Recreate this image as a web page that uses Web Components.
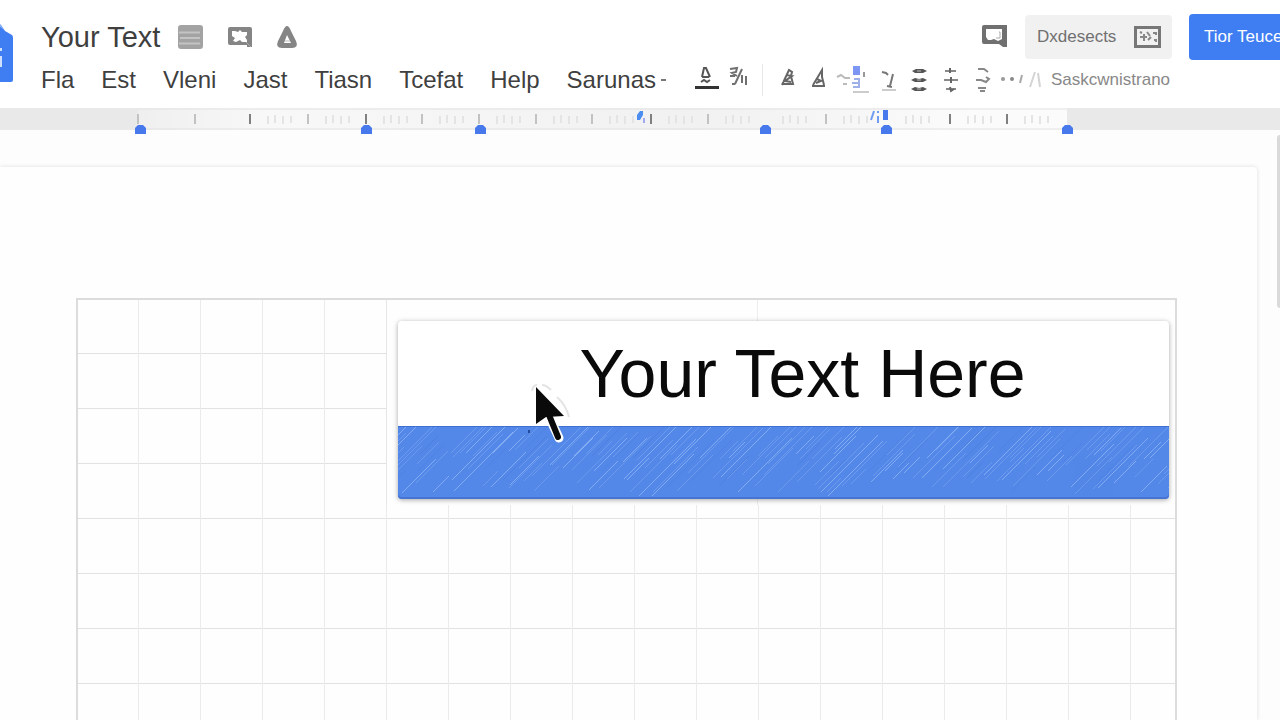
<!DOCTYPE html>
<html lang="en">
<head>
<meta charset="utf-8">
<title>Your Text</title>
<style>
    body {
        margin: 0;
        min-height: 100vh;
        overflow: hidden;
        background: #fdfdfd;
        color: #3f3f3f;
        font-family: "Liberation Sans", Arial, sans-serif;
    }
</style>
</head>
<body>
<doc-app></doc-app>

<script>
// [width, height, markup] of every glyph in the header
const ICONS = {
    logo: [40, 62, `
        <path d="M0 2h23l5 1 4 6 7 4q1 1 1 3v42q0 2-2 2H0z" fill="#3f7df2"/>
        <path d="M26 0l5 8-5-4z" fill="#8db2f8"/>
        <path d="M20 26h9v3h-9zM27 34h2v11h-2z" fill="#cfe0ff"/>`],
    lines: [25, 24, `
        <rect width="25" height="24" rx="3" fill="#a3a3a3"/>
        <path d="M1 7.500h21M2 13h20M1 18.500h21" stroke="#c4c4c4" stroke-width="2"/>`],
    star: [24, 22, `
        <path d="M2 1h20q2 0 2 2v18h-5v-2H2q-2 0-2-2V3q0-2 2-2z" fill="#858585"/>
        <path d="M4 5h3l3 1 2-2 2 2h5v3l-2 2 2 3v2h-5l-2-2-4 2-3-1 2-3-3-2z" fill="#fff"/>
        <path d="M18 16l5 5" stroke="#aaa" stroke-width="1"/>`],
    cloud: [20, 22, `
        <path d="M10 0q2 0 4 5l5 10q3 7-4 7H5q-7 0-4-7L6 5q2-5 4-5z" fill="#858585"/>
        <path d="M10 9l4 8H7z" fill="#fff"/>
        <path d="M8 15h5" stroke="#bbb"/>`],
    comment: [28, 24, `
        <path d="M4 0h23v22h-4l-4-3H4q-2 0-2-2V2q0-2 2-2z" fill="#707070"/>
        <path d="M6 4h16v10l-4 2-4-2-3 1H8l-2-3z" fill="#fff"/>
        <path d="M19 7h1v6h-4" fill="none" stroke="#aaa"/>`],
    frame: [27, 22, `
        <rect x="1.500" y="1.500" width="24" height="19" fill="#f1f1f1" stroke="#777" stroke-width="3"/>
        <path d="M6 11h7M10 8v7M13 6l3 4M14 14l3-3M19 7h3v2M20 14h2v2M6 6l2 1" stroke="#888" stroke-width="2" fill="none"/>`],
    textColor: [24, 28, `
        <path d="M1 20h24v3H1z" fill="#333"/>
        <path d="M8 11L10 2h2l4 9M8 11h7M7 16l3-2 3 2 3-2" fill="none" stroke="#555" stroke-width="2"/>`],
    percent: [24, 28, `
        <path d="M4 3l7-1-1 4-4 1 5 3M4 10h5M16 3L9 18M16 9v8M20 10v9M6 18h3" fill="none" stroke="#707070" stroke-width="2"/>`],
    bold: [24, 28, `
        <path d="M7 19L14 4l3 2-1 4 2 8H7M11 9l6 1-7 5 6 1" fill="none" stroke="#666" stroke-width="2"/>`],
    italic: [24, 28, `
        <path d="M6 19L15 4v7l2 8M5 20h13M10 13l4 2-5 2" fill="none" stroke="#666" stroke-width="2"/>`],
    highlight: [32, 28, `
        <path d="M-2 11l4-2 4 3h5M4 18h4" fill="none" stroke="#bbb" stroke-width="2"/>
        <path d="M14 0h7v9h-7z" fill="#7e96f3"/>
        <path d="M15 13h5v8h-6M13 17h7" fill="none" stroke="#9fb0e8" stroke-width="2"/>
        <path d="M25 6v5" stroke="#999" stroke-width="2"/>
        <path d="M14 26h16" stroke="#ccc" stroke-width="2"/>`],
    slant: [24, 28, `
        <path d="M3 6l4 1 2 2M14 8l-3 12M8 20l5 1" fill="none" stroke="#777" stroke-width="2"/>
        <path d="M3 24h14" stroke="#ccc" stroke-width="2"/>`],
    bullets: [24, 28, `
        <path d="M1 5l4-2h7l4 2-4 2H4zM0 14l4-2 4 1 4-1 4 2-4 2H4zM0 23l4-2 4 1 4-1 4 2-4 2H4z" fill="#555"/>
        <path d="M6 5h4M6 14h4M6 23h4" stroke="#bbb" stroke-width="1"/>`],
    numbers: [24, 28, `
        <path d="M2 5h11M1 14h14M3 23h10" stroke="#888" stroke-width="2"/>
        <path d="M7 2v5M8 11v6M7 21l1 4 3-2" stroke="#666" stroke-width="2" fill="none"/>`],
    indent: [24, 28, `
        <path d="M3 3h6l4 3M1 14h5l5 2 3-3-3-2M3 22h8M5 25h5" stroke="#888" stroke-width="2" fill="none"/>`],
    more: [36, 28, `
        <circle cx="-4" cy="13" r="2" fill="#999"/>
        <circle cx="5" cy="13" r="2" fill="#888"/>
        <path d="M15 9l-2 8" stroke="#aaa" stroke-width="2"/>
        <path d="M28 6l-5 15M31 7l2 14" stroke="#d4d4d4" stroke-width="2"/>`]
};

class DocIcon extends HTMLElement {
    constructor() {
        super();
        this.attachShadow({ mode: 'open' });
    }

    connectedCallback() {
        const [width, height, markup] = ICONS[this.getAttribute('name')];
        this.shadowRoot.innerHTML = `
        <style>
            :host { display: block; flex: none; }
            svg { display: block; overflow: visible; }
        </style>
        <svg width="${width}" height="${height}" viewBox="0 0 ${width} ${height}" aria-hidden="true">${markup}</svg>
        `;
    }
}

class DocMenuBar extends HTMLElement {
    constructor() {
        super();
        this.attachShadow({ mode: 'open' });
        this.items = ['Fla', 'Est', 'Vleni', 'Jast', 'Tiasn', 'Tcefat', 'Help', 'Sarunas'];
        this.shadowRoot.innerHTML = `
        <style>
            :host { display: block; flex: none; }
            nav { display: flex; gap: 27px; align-items: center; }
            button {
                padding: 0;
                border: 0;
                background: none;
                color: inherit;
                font: 24px/32px "Liberation Sans", Arial, sans-serif;
            }
            .caret { width: 5px; height: 2px; background: #777; margin-left: -22px; }
        </style>
        <nav>
            ${this.items.map((item) => `<button type="button">${item}</button>`).join('')}
            <span class="caret"></span>
        </nav>
        `;
    }
}

class DocToolbar extends HTMLElement {
    constructor() {
        super();
        this.attachShadow({ mode: 'open' });
        this.shadowRoot.innerHTML = `
        <style>
            :host { display: flex; align-items: center; gap: 8px; }
            button { flex: none; padding: 0; border: 0; background: none; color: inherit; }
            .label { font: 17px/32px "Liberation Sans", Arial, sans-serif; color: #888; }
            hr { flex: none; width: 1px; height: 32px; margin: 0 4px; border: 0; background: #e8e8e8; }
        </style>
        ${this._tool('textColor', 'Text color')}
        ${this._tool('percent', 'Format')}
        <hr>
        ${this._tool('bold', 'Bold')}
        ${this._tool('italic', 'Italic')}
        ${this._tool('highlight', 'Highlight')}
        ${this._tool('slant', 'Slant')}
        ${this._tool('bullets', 'Bulleted list')}
        ${this._tool('numbers', 'Numbered list')}
        ${this._tool('indent', 'Indent')}
        ${this._tool('more', 'More')}
        <button type="button" class="label">Saskcwnistrano</button>
        `;
    }

    _tool(name, label) {
        return `<button type="button" aria-label="${label}"><doc-icon name="${name}"></doc-icon></button>`;
    }
}

class DocHeader extends HTMLElement {
    constructor() {
        super();
        this.attachShadow({ mode: 'open' });
        this.shadowRoot.innerHTML = `
        <style>
            :host { display: flex; gap: 28px; height: 108px; background: #fff; }
            .logo { flex: none; margin: 22px 0 0 -27px; }
            .rows { flex: 1; min-width: 0; padding-top: 14px; }
            .row { display: flex; align-items: center; }
            .top { height: 46px; }
            .bottom { height: 40px; gap: 28px; }
            h1 { margin: 0; font: 29px/46px "Liberation Sans", Arial, sans-serif; }
            button { padding: 0; border: 0; background: none; font-family: inherit; }
            .marks { display: flex; align-items: center; gap: 25px; margin-left: 18px; }
            .actions { display: flex; align-items: center; gap: 17px; margin-left: auto; }
            .grey {
                display: flex;
                align-items: center;
                justify-content: space-between;
                width: 147px;
                height: 44px;
                padding: 0 11px 0 12px;
                box-sizing: border-box;
                border-radius: 4px;
                background: #f1f1f1;
                color: #707070;
                font-size: 17px;
            }
            .blue {
                width: 120px;
                height: 46px;
                margin-right: -29px;
                padding-left: 15px;
                border-radius: 4px;
                background: #3f7df2;
                color: #fff;
                font-size: 17px;
                text-align: left;
                white-space: nowrap;
            }
        </style>
        <doc-icon class="logo" name="logo"></doc-icon>
        <div class="rows">
            <div class="row top">
                <h1><slot name="title"></slot></h1>
                <div class="marks">
                    <button type="button" aria-label="Outline"><doc-icon name="lines"></doc-icon></button>
                    <button type="button" aria-label="Star"><doc-icon name="star"></doc-icon></button>
                    <button type="button" aria-label="Drive"><doc-icon name="cloud"></doc-icon></button>
                </div>
                <div class="actions">
                    <button type="button" aria-label="Comments"><doc-icon name="comment"></doc-icon></button>
                    <button type="button" class="grey">Dxdesects <doc-icon name="frame"></doc-icon></button>
                    <button type="button" class="blue">Tior Teuce</button>
                </div>
            </div>
            <div class="row bottom">
                <doc-menu-bar></doc-menu-bar>
                <doc-toolbar></doc-toolbar>
            </div>
        </div>
        `;
    }
}

class DocRuler extends HTMLElement {
    constructor() {
        super();
        this.attachShadow({ mode: 'open' });
        this.shadowRoot.innerHTML = `
        <style>
            :host { display: flex; height: 22px; background: #e9e9e9; }
            .scale { flex: 1; margin: 0 213px 0 138px; background: linear-gradient(90deg, #efefef, #f8f8f8 14%, #f1f1f1 60%, #fbfbfb 90%); }
            svg { display: block; width: 100%; height: 22px; overflow: visible; }
        </style>
        <div class="scale">
            <svg viewBox="0 0 929 22" preserveAspectRatio="none" aria-hidden="true">${this._marks()}</svg>
        </div>
        `;
    }

    _marks() {
        const ticks = [0, 57, 112, 170, 228, 284, 341, 398, 454, 513, 570, 688, 812, 869];
        const dark = [112, 228, 513, 812, 869];
        let out = '<path d="M0 1h929M0 21h929" stroke="#e2e2e2" stroke-width="1"/>';
        for (const x of ticks) {
            out += `<path d="M${x} 6v10" stroke="${dark.includes(x) ? '#808080' : '#c2c2c2'}" stroke-width="2"/>`;
        }
        for (const x of [...ticks.slice(2), 627, 750]) {
            out += `<path d="M${x + 18} 8v8M${x + 25} 7v8M${x + 33} 8v8M${x + 41} 8v7" stroke="#e4e4e4" stroke-width="2"/>`;
        }
        // indent and tab stops
        for (const x of [2, 228, 342, 627, 748, 929]) {
            out += `<path d="M${x - 5} 26v-6l3-3h5l3 3v6z" fill="#4779ec"/>`;
        }
        out += '<path d="M499 12v-5l3-4h3v4l-3 5z" fill="#4c8df0"/><path d="M506 10v5" stroke="#9fa8f0" stroke-width="2"/>';
        out += '<path d="M733 12l3-9M740 3v2M740 8v7" stroke="#6f9cf2" stroke-width="2"/>';
        out += '<path d="M745 2h5v10h-5z" fill="#4779ec"/>';
        return out;
    }
}

class TextCard extends HTMLElement {
    constructor() {
        super();
        this.attachShadow({ mode: 'open' });
        this.shadowRoot.innerHTML = `
        <style>
            :host {
                display: block;
                position: relative;
                border-radius: 4px;
                background: #fff;
                box-shadow: 0 1px 5px rgba(0, 0, 0, 0.35);
            }
            h2 {
                margin: 0;
                padding-left: 38px;
                color: #0a0a0a;
                font: 68px/105px "Liberation Sans", Arial, sans-serif;
                text-align: center;
            }
            .band { height: 73px; overflow: hidden; border-radius: 0 0 4px 4px; background: #5388e8; box-shadow: inset 0 1px #3f6fd2, inset 0 -2px #4674d2; }
            .band svg { display: block; width: 100%; height: 73px; }
            .cursor { position: absolute; left: 17.500%; top: 62px; }
        </style>
        <h2><slot></slot></h2>
        <div class="band">
            <svg viewBox="0 0 771 73" preserveAspectRatio="none" aria-hidden="true">${this._hatch()}</svg>
        </div>
        <svg class="cursor" width="36" height="62" overflow="visible" aria-hidden="true">
            <path d="M-1 8Q0 2 4 2M9 2Q13 2 18 7M24 14Q33 22 36 34" fill="none" stroke="#e4e4e4" stroke-width="2"/>
            <path d="M17 36l9 19" stroke="#fff" stroke-width="9" stroke-linecap="round"/>
            <path d="M16 32l9 22" stroke="#0a0a0a" stroke-width="6" stroke-linecap="round"/>
            <path d="M3 4v37l10-7 18-1z" fill="#0a0a0a"/>
            <path d="M-4 47v3" stroke="#234b9c" stroke-width="2"/>
        </svg>
        `;
    }

    // pencil-like diagonal strokes with uneven length and strength
    _hatch() {
        let seed = 11;
        const random = (max) => {
            seed = (seed * 16807) % 2147483647;
            return seed % max;
        };
        let out = '';
        for (let i = 0; i < 170; i++) {
            const x = i * 5 - 65 + random(5);
            const from = random(48) + 2;
            const to = Math.min(71, from + 14 + random(46));
            const color = random(5) === 0 ? '#4b7edc' : '#8db4f6';
            const opacity = random(3) === 0 ? 0.8 : 0.4;
            out += `<path d="M${x + from} ${72 - from}L${x + to} ${72 - to}" stroke="${color}" stroke-width="1" opacity="${opacity}"/>`;
        }
        return out;
    }
}

class DocSheet extends HTMLElement {
    constructor() {
        super();
        this.attachShadow({ mode: 'open' });
        this.shadowRoot.innerHTML = `
        <style>
            :host { display: flex; padding-top: 37px; position: relative; }
            .sheet {
                flex: 1;
                display: flex;
                margin-right: 23px;
                padding: 131px 80px 0 76px;
                min-height: 422px;
                border-radius: 0 4px 0 0;
                background: #fefefe;
                box-shadow: 0 0 4px #ddd;
            }
            .grid {
                flex: 1;
                border: 2px solid #dcdcdc;
                border-bottom: 0;
                background:
                    repeating-linear-gradient(90deg, transparent 0 61px, #ebebeb 61px 62px),
                    repeating-linear-gradient(transparent 0 54px, #e2e2e2 54px 55px);
                background-position: -1px -1px;
            }
            .merged {
                margin-left: 308px;
                padding: 21px 6px 6px 11px;
                border-left: 1px solid #e6e6e6;
                background: linear-gradient(90deg, transparent 370px, #eee 370px 371px, transparent 371px), #fefefe;
            }
            .thumb { position: absolute; top: 5px; right: 0; width: 3px; height: 173px; border-radius: 3px 0 0 3px; background: #dadada; }
        </style>
        <div class="sheet">
            <div class="grid">
                <div class="merged"><slot></slot></div>
            </div>
        </div>
        <div class="thumb"></div>
        `;
    }
}

class DocApp extends HTMLElement {
    constructor() {
        super();
        this.attachShadow({ mode: 'open' });
        this.shadowRoot.innerHTML = `
        <style>
            :host { display: block; }
        </style>
        <doc-header><span slot="title">Your Text</span></doc-header>
        <doc-ruler></doc-ruler>
        <doc-sheet>
            <text-card>Your Text Here</text-card>
        </doc-sheet>
        `;
    }
}

customElements.define('doc-icon', DocIcon);
customElements.define('doc-menu-bar', DocMenuBar);
customElements.define('doc-toolbar', DocToolbar);
customElements.define('doc-header', DocHeader);
customElements.define('doc-ruler', DocRuler);
customElements.define('text-card', TextCard);
customElements.define('doc-sheet', DocSheet);
customElements.define('doc-app', DocApp);
</script>
</body>
</html>
